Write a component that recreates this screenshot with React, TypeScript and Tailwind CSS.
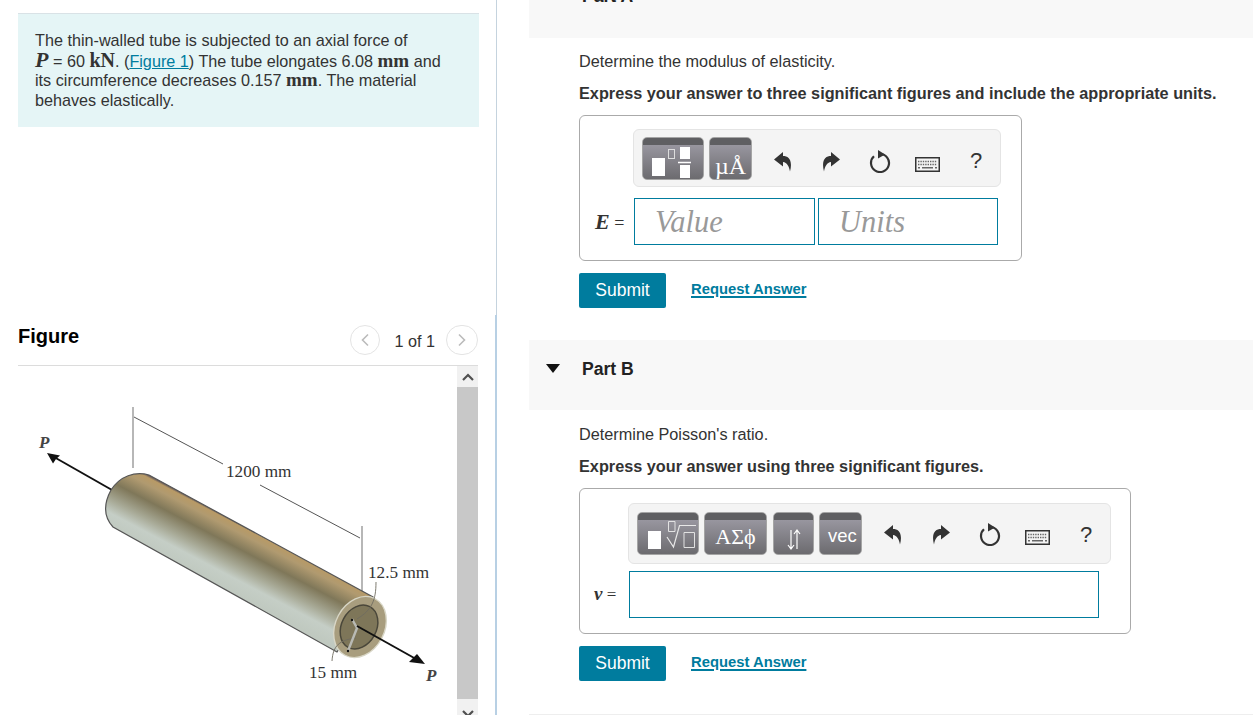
const SANS = "font-['Liberation_Sans',Arial,sans-serif]"
const SERIF = "font-['Liberation_Serif',serif]"

function Undo({ flip }: { flip?: boolean }) {
  return (
    <svg width="18" height="21" viewBox="0 0 18 21" className={flip ? '-scale-x-100' : ''}>
      <path d="M0 8.5 L9 1 V5 C14.5 5 19 9 16 20.5 C15 15 13 11.5 9 11 V15.5 Z" fill="#333" />
    </svg>
  )
}

function Reset() {
  return (
    <svg width="22" height="23" viewBox="0 0 22 23">
      <path d="M5 6.3 A9 9 0 1 0 11 4" fill="none" stroke="#333" strokeWidth="2.2" />
      <path d="M9 0 L16 4.5 L9 8.5 Z" fill="#333" />
    </svg>
  )
}

function Keyboard() {
  return (
    <svg width="25" height="15" viewBox="0 0 25 15" className="mt-[6px]">
      <rect x="0.75" y="0.75" width="23.5" height="13.5" fill="#f4f4f4" stroke="#333" strokeWidth="1.5" />
      <path d="M3 4.5 H22 M3 7.5 H22" stroke="#666" strokeWidth="1.6" strokeDasharray="1.4 1" />
      <path d="M3 10.8 H5 M7 10.8 H18 M20 10.8 H22" stroke="#666" strokeWidth="1.6" />
    </svg>
  )
}

function ToolIcons() {
  return (
    <div className="grid grid-cols-[repeat(5,48.25px)] items-center justify-items-center">
      <Undo />
      <Undo flip />
      <Reset />
      <Keyboard />
      <span className={`${SANS} text-[22px] leading-none text-[#333]`}>?</span>
    </div>
  )
}

function ToolButton({ w, children }: { w: string; children: React.ReactNode }) {
  return (
    <div className={`${w} h-[43px] shrink-0 overflow-hidden rounded-[5px] border border-[#a5a5a5] bg-[linear-gradient(#5f5f62_0,#5f5f62_7px,#98969f_7px,#6c6b6f_100%)] text-white`}>
      {children}
    </div>
  )
}

function Question({ text, sub }: { text: string; sub: string }) {
  return (
    <>
      <p className="mt-[13px] h-[20px] text-[16.25px] leading-[20px] text-[#333]">{text}</p>
      <p className="mt-[12px] h-[20px] text-[16.25px] font-bold leading-[20px] text-[#333]">{sub}</p>
    </>
  )
}

function SubmitRow() {
  return (
    <div className="flex items-center">
      <button className="h-[35px] w-[87px] rounded-[2px] bg-[#007c9e] text-[17.5px] text-white">Submit</button>
      <a className="mb-[2px] ml-[25px] text-[14.8px] font-bold text-[#007c9e] underline decoration-2 underline-offset-2">Request Answer</a>
    </div>
  )
}

function TubeFigure() {
  return (
    <svg viewBox="18 366 439 349" className="h-[349px] w-[439px]">
      <defs>
        <linearGradient id="tube" gradientUnits="userSpaceOnUse" x1="255" y1="531" x2="225" y2="588">
          <stop offset="0" stopColor="#5a5058" />
          <stop offset="0.04" stopColor="#b89a66" />
          <stop offset="0.14" stopColor="#b09a70" />
          <stop offset="0.36" stopColor="#7f7759" />
          <stop offset="0.62" stopColor="#a8aa97" />
          <stop offset="0.8" stopColor="#c5cec6" />
          <stop offset="1" stopColor="#c0c9c0" />
        </linearGradient>
      </defs>
      <path d="M133 407 V468 M362 526 V595" stroke="#888" strokeWidth="1.2" fill="none" />
      <path d="M134 417 L223 464 M260 485 L360 538" stroke="#555" strokeWidth="1" fill="none" />
      <path d="M112 490 L54 457" stroke="#111" strokeWidth="2" />
      <path d="M47 453 L60 455.5 L56 459 L53 463.5 Z" fill="#111" />
      <path
        d="M113 527 C103 516 104 503 111 490 C120 476 135 471 149 475 L373 597 L337 652 Z"
        fill="url(#tube)"
        stroke="#555"
        strokeWidth="1.2"
      />
      <ellipse cx="360" cy="627" rx="32" ry="24.5" transform="rotate(118 360 627)" fill="#a89d7e" stroke="#d8d6c6" strokeWidth="1.4" />
      <ellipse cx="359" cy="627" rx="23" ry="17.5" transform="rotate(118 359 627)" fill="#7e7659" stroke="#4a473a" strokeWidth="1.5" />
      <path d="M376 582 C376 600 372 610 357 619 M332 661 C333 645 340 640 356 638" stroke="#6f6c60" strokeWidth="0.9" fill="none" />
      <path d="M352 619 L357 628 L348 651" stroke="#b9bab4" strokeWidth="2.4" fill="none" />
      <circle cx="352" cy="620" r="1.2" fill="#111" />
      <circle cx="348" cy="651" r="1.2" fill="#111" />
      <path d="M357 626 L416 659" stroke="#111" strokeWidth="2" />
      <path d="M425 664 L409 662 L413 658 L417 654 Z" fill="#111" />
      <g fontFamily="'Liberation Serif', serif" fontSize="17.2" fill="#333">
        <text x="226" y="477">1200 mm</text>
        <text x="368" y="578">12.5 mm</text>
        <text x="309" y="678">15 mm</text>
        <text x="39" y="448" fontSize="17" fontStyle="italic" fontWeight="bold" fill="#444">P</text>
        <text x="426" y="681" fontSize="17" fontStyle="italic" fontWeight="bold" fill="#444">P</text>
      </g>
    </svg>
  )
}

export default function App() {
  return (
    <div className={`${SANS} flex h-[715px] w-[1253px] overflow-hidden bg-white`}>
      {/* Left pane */}
      <div className="h-full w-[495px] shrink-0 pl-[18px] pr-[17px]">
        <div className="-mr-[1px] mt-[13px] h-[114px] border-t border-[#d9e2e6] bg-[#e5f5f6] pl-[17px] pt-[16px] text-[16.2px] leading-[20px] text-[#333]">
          <p className="h-[20px]">The thin-walled tube is subjected to an axial force of</p>
          <p className="-mt-[1px] h-[21px]">
            <span className={`${SERIF} text-[22px] font-bold italic leading-none`}>P</span> = 60{' '}
            <span className={`${SERIF} text-[20px] font-bold leading-none`}>kN</span>. (
            <a className="text-[#007c9e] underline">Figure 1</a>) The tube elongates 6.08{' '}
            <span className={`${SERIF} text-[19px] font-bold leading-none`}>mm</span> and
          </p>
          <p className="h-[20px]">
            its circumference decreases 0.157{' '}
            <span className={`${SERIF} text-[19px] font-bold leading-none`}>mm</span>. The material
          </p>
          <p className="h-[20px]">behaves elastically.</p>
        </div>

        <div className="mt-[198px] flex h-[41px] items-start border-b border-[#dcdcdc]">
          <h2 className="mt-[1px] text-[20px] font-bold leading-[20px] text-black">Figure</h2>
          <div className="ml-auto flex items-center text-[16.2px] text-[#333]">
            <span className="flex h-[30px] w-[30px] items-center justify-center rounded-full border border-[#e4e4e4] text-[#bbb]">
              <svg width="10" height="14" viewBox="0 0 10 14"><path d="M8 1.5 L2.5 7 L8 12.5" fill="none" stroke="currentColor" strokeWidth="1.6" /></svg>
            </span>
            <span className="ml-[14px] mr-[11px] mt-[2px]">1 of 1</span>
            <span className="flex h-[30px] w-[32px] items-center justify-center rounded-full border border-[#e4e4e4] text-[#bbb]">
              <svg width="10" height="14" viewBox="0 0 10 14"><path d="M2 1.5 L7.5 7 L2 12.5" fill="none" stroke="currentColor" strokeWidth="1.6" /></svg>
            </span>
          </div>
        </div>

        <div className="flex h-[349px]">
          <TubeFigure />
          <div className="flex h-full w-[21px] shrink-0 flex-col">
            <div className="flex h-[21px] items-center justify-center bg-[#f1f1f1]">
              <svg width="12" height="8" viewBox="0 0 12 8"><path d="M1 7 L6 2 L11 7" fill="none" stroke="#505050" strokeWidth="2.2" /></svg>
            </div>
            <div className="flex-1 bg-[#c8c8c8]" />
            <div className="flex h-[16px] items-end justify-center overflow-hidden bg-[#f1f1f1]">
              <svg width="12" height="8" viewBox="0 0 12 8" className="-mb-[3px]"><path d="M1 1 L6 6 L11 1" fill="none" stroke="#505050" strokeWidth="2.2" /></svg>
            </div>
          </div>
        </div>
      </div>

      {/* Divider */}
      <div className="flex h-full w-[2px] shrink-0 flex-col">
        <div className="ml-[1px] h-[315px] w-[1px] bg-[#c5d3de]" />
        <div className="w-[2px] flex-1 bg-[#b8d0e4]" />
      </div>

      {/* Right pane */}
      <div className="ml-[32px] flex-1">
        <div className="h-[38px] overflow-hidden bg-[#f8f8f8]">
          <h3 className="-mt-[14px] ml-[53px] text-[17.6px] font-bold leading-[20px] text-[#222]">Part A</h3>
        </div>
        <div className="pl-[50px]">
          <Question text="Determine the modulus of elasticity." sub="Express your answer to three significant figures and include the appropriate units." />

          <div className="mt-[12px] h-[146px] w-[443px] rounded-[6px] border border-[#aaa] pl-[53px] pt-[13px]">
            <div className="flex h-[58px] w-[368px] items-center rounded-[6px] border border-[#e4e4e4] bg-[#f4f4f4] pl-[8px]">
              <ToolButton w="w-[62px]">
                <svg width="60" height="41" viewBox="0 0 60 41">
                  <path d="M9 20 H22 V38 H9 Z M37 9 H47 V21 H37 Z M37 27 H47 V40 H37 Z" fill="#fff" />
                  <rect x="25.5" y="11.5" width="6" height="9" fill="none" stroke="#ddd" />
                  <path d="M35 24.5 H48" stroke="#fff" strokeWidth="1.5" />
                </svg>
              </ToolButton>
              <div className="ml-[5px]">
                <ToolButton w="w-[43px]">
                  <div className={`${SERIF} pt-[15px] text-center text-[24px] leading-[26px]`}>µÅ</div>
                </ToolButton>
              </div>
              <div className="ml-[7px] mt-[6px]">
                <ToolIcons />
              </div>
            </div>

            <div className="-ml-[38px] mt-[11px] flex items-center">
              <span className={`${SERIF} w-[39px] text-[18px] text-[#333]`}>
                <span className="text-[22px] font-bold italic">E</span> =
              </span>
              <div className={`${SERIF} flex h-[47px] w-[181px] items-center border border-[#007c9e] pl-[20px] pt-[3px] text-[30.5px] italic text-[#999]`}>Value</div>
              <div className={`${SERIF} ml-[3px] flex h-[47px] w-[180px] items-center border border-[#007c9e] pl-[20px] pt-[3px] text-[30.5px] italic text-[#999]`}>Units</div>
            </div>
          </div>

          <div className="mt-[12px]">
            <SubmitRow />
          </div>
        </div>

        <div className="mt-[32px] flex h-[70px] items-start bg-[#f8f8f8] pl-[17px] pt-[19px]">
          <svg width="14" height="9" viewBox="0 0 14 9" className="mt-[5px]"><path d="M0 0 H14 L7 9 Z" fill="#111" /></svg>
          <h3 className="ml-[22px] text-[17.6px] font-bold leading-[20px] text-[#222]">Part B</h3>
        </div>

        <div className="border-b border-[#eee] pb-[33px] pl-[50px] pt-[1px]">
          <Question text="Determine Poisson's ratio." sub="Express your answer using three significant figures." />

          <div className="mt-[12px] h-[146px] w-[552px] rounded-[6px] border border-[#aaa] pl-[48px] pt-[14px]">
            <div className="flex h-[61px] w-[483px] items-center rounded-[6px] border border-[#e4e4e4] bg-[#f4f4f4] pl-[8px]">
              <ToolButton w="w-[62px]">
                <svg width="60" height="41" viewBox="0 0 60 41">
                  <path d="M10 18 H23 V36 H10 Z" fill="#fff" />
                  <path d="M30.5 8.5 H37 V18.5 H30.5 Z M46 19.5 H56.5 V34.5 H46 Z" fill="none" stroke="#e2e2e2" />
                  <path d="M29 24 L35.5 34 L41.5 12.5 H58" fill="none" stroke="#e8e8e8" strokeWidth="1.2" />
                </svg>
              </ToolButton>
              <div className="ml-[5px]">
                <ToolButton w="w-[63px]">
                  <div className={`${SERIF} pt-[11px] text-center text-[22px] leading-[26px]`}>ΑΣϕ</div>
                </ToolButton>
              </div>
              <div className="ml-[6px]">
                <ToolButton w="w-[41px]">
                  <svg width="39" height="41" viewBox="0 0 39 41">
                    <path d="M17 17 V36 M14 32 L17 36 L20 32 M23 36 V17 M20 21 L23 17 L26 21" fill="none" stroke="#fff" strokeWidth="1.2" />
                  </svg>
                </ToolButton>
              </div>
              <div className="ml-[5px]">
                <ToolButton w="w-[43px]">
                  <div className="whitespace-nowrap pl-[8px] pt-[12px] text-[18.5px] leading-[22px]">vec</div>
                </ToolButton>
              </div>
              <div className="ml-[7px] mt-[2px]">
                <ToolIcons />
              </div>
            </div>

            <div className="-ml-[34px] mt-[7px] flex items-center">
              <span className={`${SERIF} w-[35px] text-[17px] text-[#333]`}>
                <span className="text-[19px] font-bold italic">ν</span> =
              </span>
              <div className="h-[47px] w-[470px] border border-[#007c9e]" />
            </div>
          </div>

          <div className="mt-[12px]">
            <SubmitRow />
          </div>
        </div>
      </div>
    </div>
  )
}
